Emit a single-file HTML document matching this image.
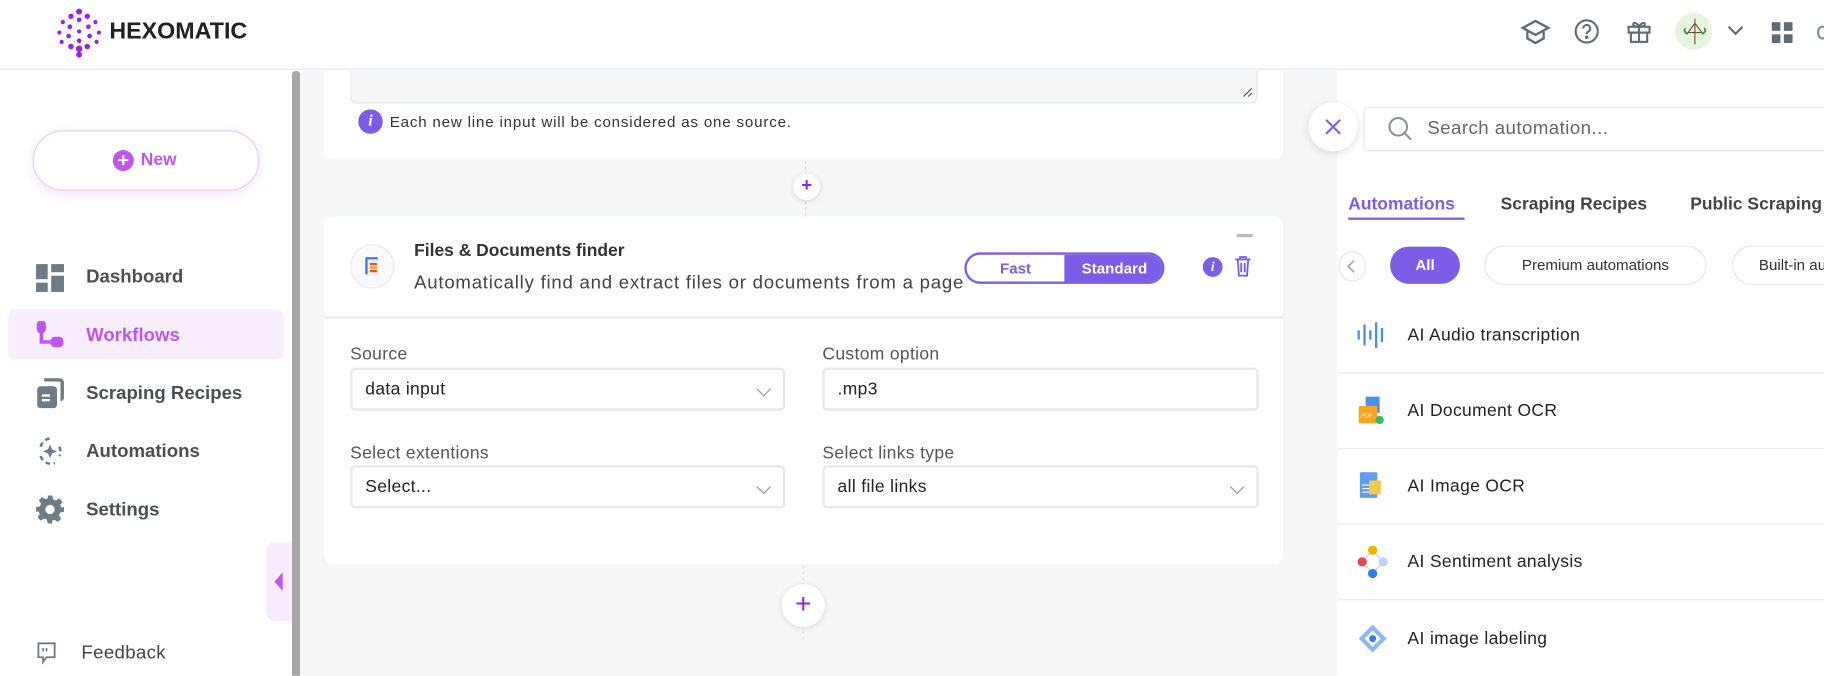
<!DOCTYPE html>
<html><head><meta charset="utf-8">
<style>
*{box-sizing:border-box;margin:0;padding:0}
html,body{width:1824px;height:675px;overflow:hidden;background:#fff;font-family:"Liberation Sans",sans-serif}
#s{position:absolute;left:0;top:0;width:1568px;height:581px;transform:scale(1.16327);transform-origin:0 0;overflow:hidden;background:#fff}
.a{position:absolute}
.nav{position:absolute;left:74px;font-size:16px;font-weight:bold;color:#4a4f55}
.lbl{position:absolute;font-size:15px;color:#555;letter-spacing:.3px}
.inp{position:absolute;height:37px;border:2px solid #e6e8eb;border-radius:4px;background:#fff;font-size:15px;color:#222;padding:8px 11px;letter-spacing:.3px}
.chev{position:absolute;right:12px;top:12px;width:9px;height:9px;border-right:1.5px solid #999;border-bottom:1.5px solid #999;transform:rotate(45deg)}
.row{position:absolute;left:1150px;width:418px;height:65px;border-bottom:1.5px solid #e8eaed}
.row span{position:absolute;left:60px;top:50%;transform:translateY(-50%);font-size:15px;color:#222;letter-spacing:.3px}
.row svg{position:absolute;left:16px;top:50%;transform:translateY(-50%)}
</style></head><body><div id="s">
<div class="a" style="left:0;top:0;width:1568px;height:60px;border-bottom:1.5px solid #e6e6e6;background:#fff"></div>
<svg class="a" style="left:46px;top:6px" width="44" height="44" viewBox="0 0 44 44" fill="#9b1fe8">
<circle cx="22" cy="4" r="2.6"/><circle cx="15" cy="8" r="2.3"/><circle cx="29" cy="8" r="2.3"/><circle cx="22" cy="11" r="2"/>
<circle cx="8" cy="13" r="1.8"/><circle cx="36" cy="13" r="1.8"/><circle cx="14" cy="17" r="2"/><circle cx="30" cy="17" r="2"/>
<circle cx="5" cy="22" r="1.8"/><circle cx="39" cy="22" r="1.8"/><circle cx="22" cy="21" r="1.8"/><circle cx="13" cy="25" r="2"/><circle cx="31" cy="25" r="2"/>
<circle cx="7" cy="30" r="1.8"/><circle cx="37" cy="30" r="1.8"/><circle cx="22" cy="29" r="2"/><circle cx="15" cy="34" r="2.4"/><circle cx="29" cy="34" r="2.4"/>
<circle cx="22" cy="36" r="2.8"/><circle cx="22" cy="41" r="2.5"/></svg>
<div class="a" style="left:94px;top:16px;font-size:20px;font-weight:bold;color:#222">HEXOMATIC</div>
<svg class="a" style="left:1307px;top:15px" width="26" height="24" viewBox="0 0 26 24" fill="none" stroke="#5f6b75" stroke-width="2"><path d="M2 9 13 3l11 6-11 6z"/><path d="M6 12v6l7 4 7-4v-6"/></svg>
<svg class="a" style="left:1353px;top:16px" width="22" height="22" viewBox="0 0 22 22" fill="none" stroke="#5f6b75" stroke-width="1.8"><circle cx="11" cy="11" r="9.5"/><path d="M8 8.5a3 3 0 1 1 4 2.8c-.8.4-1 1-1 2"/><circle cx="11" cy="16" r=".6" fill="#5f6b75"/></svg>
<svg class="a" style="left:1398px;top:16px" width="22" height="22" viewBox="0 0 22 22" fill="none" stroke="#5f6b75" stroke-width="1.8"><rect x="2" y="7" width="18" height="5"/><rect x="4" y="12" width="14" height="8"/><path d="M11 7v13M11 7C9 3 6 3 6 5s3 2 5 2c2 0 5 0 5-2s-3-2-5 2"/></svg>
<div class="a" style="left:1440px;top:11px;width:32px;height:32px;border-radius:50%;background:#e7f5df"></div>
<svg class="a" style="left:1446px;top:14px" width="22" height="26" viewBox="0 0 22 26" fill="none" stroke="#6b5a3a" stroke-width="1"><path d="M11 2v22M5 14l6-8 6 8zM3 10c-2 2 0 5 2 5M19 10c2 2 0 5-2 5" /><path d="M2 11c0 3 2 4 3 4M20 11c0 3-2 4-3 4" stroke="#2a9a2a" stroke-width="1.5"/></svg>
<svg class="a" style="left:1485px;top:21px" width="14" height="10" viewBox="0 0 14 10" fill="none" stroke="#5f6b75" stroke-width="1.8"><path d="M1 2l6 6 6-6"/></svg>
<svg class="a" style="left:1523px;top:19px" width="18" height="18" viewBox="0 0 18 18" fill="#5f6b75"><rect x="0" y="0" width="7.5" height="7.5"/><rect x="10.5" y="0" width="7.5" height="7.5"/><rect x="0" y="10.5" width="7.5" height="7.5"/><rect x="10.5" y="10.5" width="7.5" height="7.5"/></svg>
<div class="a" style="left:1562px;top:22px;width:10px;height:12px;border:2px solid #8a949c;border-radius:6px"></div>

<div class="a" style="left:251px;top:61px;width:7px;height:520px;background:#a6a6a6;border-radius:3px 3px 0 0"></div>
<div class="a" style="left:28px;top:112px;width:195px;height:52px;border:1.5px solid #e9c9f8;border-radius:26px;background:#fff;box-shadow:0 3px 10px rgba(190,110,240,.18)"></div>
<div class="a" style="left:97px;top:129px;width:18px;height:18px;border-radius:50%;background:#c155ef;color:#fff;font-size:17px;line-height:17px;text-align:center;font-weight:bold">+</div>
<div class="a" style="left:121px;top:129px;font-size:15px;font-weight:bold;color:#c155ef">New</div>

<svg class="a" style="left:31px;top:227px" width="24" height="24" viewBox="0 0 24 24" fill="#6e7c88"><rect x="0" y="0" width="10" height="13"/><rect x="13" y="0" width="11" height="7"/><rect x="13" y="10" width="11" height="14"/><rect x="0" y="16" width="10" height="8"/></svg>
<div class="nav" style="top:230px">Dashboard</div>
<div class="a" style="left:7px;top:266px;width:237px;height:43px;background:#f8eefd;border-radius:6px"></div>
<svg class="a" style="left:31px;top:276px" width="24" height="24" viewBox="0 0 24 24" fill="none" stroke="#c155ef" stroke-width="3"><rect x="2" y="1" width="5" height="8" rx="2" fill="#c155ef"/><path d="M4.5 9v9h8"/><rect x="14" y="15" width="8" height="6" rx="2" fill="#c155ef"/></svg>
<div class="nav" style="top:280px;color:#c155ef">Workflows</div>
<svg class="a" style="left:31px;top:325px" width="24" height="26" viewBox="0 0 24 26" fill="#6e7c88"><path d="M7 0h13a4 4 0 0 1 4 4v13a3 3 0 0 1-3 3V4a1 1 0 0 0-1-1H7z"/><rect x="1" y="7" width="17" height="19" rx="3"/><rect x="5" y="14" width="7" height="2" fill="#fff"/><rect x="5" y="18" width="7" height="2" fill="#fff"/></svg>
<div class="nav" style="top:330px">Scraping Recipes</div>
<svg class="a" style="left:31px;top:375px" width="24" height="26" viewBox="0 0 24 26" fill="none" stroke="#6e7c88" stroke-width="2.2"><path d="M4 9a9 9 0 0 1 8-7M20 9a9 9 0 0 1 0 8M4 17a9 9 0 0 0 12 6" stroke-dasharray="4 3"/><path d="M12 7l1.7 4.3L18 13l-4.3 1.7L12 19l-1.7-4.3L6 13l4.3-1.7z" fill="#6e7c88" stroke="none"/></svg>
<div class="nav" style="top:380px">Automations</div>
<svg class="a" style="left:31px;top:426px" width="24" height="24" viewBox="0 0 24 24" fill="#6e7c88"><path d="M10 0h4l.7 3.3 2.4 1 2.8-1.9 2.8 2.8-1.9 2.8 1 2.4L24 10v4l-3.3.7-1 2.4 1.9 2.8-2.8 2.8-2.8-1.9-2.4 1L14 24h-4l-.7-3.3-2.4-1-2.8 1.9-2.8-2.8 1.9-2.8-1-2.4L0 14v-4l3.3-.7 1-2.4L2.4 4.1l2.8-2.8 2.8 1.9 2.4-1z"/><circle cx="12" cy="12" r="4" fill="#fff"/></svg>
<div class="nav" style="top:430px">Settings</div>
<div class="a" style="left:229px;top:466px;width:22px;height:68px;background:#f7ebfd;border-radius:8px 0 0 8px"></div>
<div class="a" style="left:236px;top:492px;width:0;height:0;border-top:8px solid transparent;border-bottom:8px solid transparent;border-right:7px solid #c155ef"></div>
<svg class="a" style="left:32px;top:552px" width="16" height="20" viewBox="0 0 16 20" fill="none" stroke="#6e7c88" stroke-width="1.6"><path d="M1 1h14v12H8l-3 4v-4H1z"/><path d="M5 5v3M8 5v3" stroke-width="1.4"/></svg>
<div class="a" style="left:70px;top:553px;font-size:16px;color:#444;letter-spacing:.3px">Feedback</div>

<div class="a" style="left:258px;top:61px;width:892px;height:520px;background:#f6f7f9"></div>
<div class="a" style="left:279px;top:61px;width:824px;height:76px;background:#fff;border-radius:0 0 8px 8px"></div>
<div class="a" style="left:301px;top:61px;width:780px;height:28px;background:#f6f7f9;border:1.5px solid #e3e5e8;border-top:none;border-radius:0 0 6px 6px"></div>
<svg class="a" style="left:1068px;top:75px" width="9" height="9" viewBox="0 0 9 9" stroke="#555" stroke-width="1"><path d="M1 8 8 1M5 8l3-3"/></svg>
<div class="a" style="left:308px;top:94px;width:21px;height:21px;border-radius:50%;background:#7b5de8;color:#fff;font:italic bold 14px/21px 'Liberation Serif',serif;text-align:center">i</div>
<div class="a" style="left:335px;top:97px;font-size:13px;color:#333;letter-spacing:.7px">Each new line input will be considered as one source.</div>
<div class="a" style="left:692px;top:138px;height:48px;border-left:1px dashed #ddd"></div>
<div class="a" style="left:682px;top:149px;width:23px;height:23px;border-radius:50%;background:#fff;box-shadow:0 1px 5px rgba(0,0,0,.15);color:#9b1fe8;font-size:16px;line-height:22px;text-align:center;font-weight:bold">+</div>

<div class="a" style="left:279px;top:186px;width:824px;height:299px;background:#fff;border-radius:8px"></div>
<div class="a" style="left:1063px;top:201px;width:14px;height:3px;background:#bbb;border-radius:2px"></div>
<div class="a" style="left:301px;top:210px;width:38px;height:38px;border-radius:50%;border:1.5px solid #e8eaef;background:#f9fafc"></div>
<svg class="a" style="left:313px;top:220px" width="14" height="18" viewBox="0 0 14 18"><rect x="1" y="1" width="11" height="15" rx="1" fill="#3f7be8"/><rect x="3" y="3" width="10" height="14" fill="#eee"/><rect x="5" y="6" width="6" height="2" fill="#e74c3c"/><rect x="5" y="9" width="6" height="2" fill="#f39c12"/><rect x="5" y="12" width="6" height="2" fill="#e74c3c"/></svg>
<div class="a" style="left:356px;top:207px;font-size:15px;font-weight:bold;color:#333">Files &amp; Documents finder</div>
<div class="a" style="left:356px;top:235px;font-size:16px;color:#444;letter-spacing:.65px;white-space:nowrap">Automatically find and extract files or documents from a page</div>
<div class="a" style="left:829px;top:217px;width:172px;height:27px;border:2px solid #7b5de8;border-radius:14px;overflow:hidden;background:#fff">
<div class="a" style="left:0;top:0;width:84px;height:23px;color:#7b5de8;font-size:13px;font-weight:bold;text-align:center;line-height:23px">Fast</div>
<div class="a" style="left:84px;top:0;width:86px;height:23px;background:#7b5de8;color:#fff;font-size:13px;font-weight:bold;text-align:center;line-height:23px">Standard</div></div>
<div class="a" style="left:1034px;top:221px;width:17px;height:17px;border-radius:50%;background:#7b5de8;color:#fff;font:italic bold 12px/17px 'Liberation Serif',serif;text-align:center">i</div>
<svg class="a" style="left:1061px;top:219px" width="15" height="19" viewBox="0 0 15 19" fill="none" stroke="#7b5de8" stroke-width="1.6"><path d="M1 4h13M5 4V2h5v2M3 4l1 14h7l1-14M6 7v8M9 7v8"/></svg>
<div class="a" style="left:279px;top:272px;width:824px;height:1.5px;background:#e9ebee"></div>

<div class="lbl" style="left:301px;top:296px">Source</div>
<div class="inp" style="left:301px;top:316px;width:374px">data input<div class="chev"></div></div>
<div class="lbl" style="left:707px;top:296px">Custom option</div>
<div class="inp" style="left:707px;top:316px;width:375px">.mp3</div>
<div class="lbl" style="left:301px;top:381px">Select extentions</div>
<div class="inp" style="left:301px;top:400px;width:374px">Select...<div class="chev"></div></div>
<div class="lbl" style="left:707px;top:381px">Select links type</div>
<div class="inp" style="left:707px;top:400px;width:375px">all file links<div class="chev"></div></div>

<div class="a" style="left:690px;top:486px;height:64px;border-left:1px dashed #e2e2e2"></div>
<div class="a" style="left:672px;top:502px;width:37px;height:37px;border-radius:50%;background:#fff;box-shadow:0 1px 6px rgba(0,0,0,.13);color:#9b1fe8;font-size:24px;line-height:35px;text-align:center">+</div>

<div class="a" style="left:1150px;top:61px;width:418px;height:520px;background:#fff"></div>
<div class="a" style="left:1125px;top:88px;width:42px;height:42px;border-radius:50%;background:#fff;box-shadow:0 2px 8px rgba(0,0,0,.13)"></div>
<svg class="a" style="left:1139px;top:102px" width="14" height="14" viewBox="0 0 14 14" stroke="#7b5de8" stroke-width="1.8"><path d="M1 1l12 12M13 1 1 13"/></svg>
<div class="a" style="left:1172px;top:92px;width:410px;height:38px;border:1.5px solid #e3e5e8;border-radius:4px"></div>
<svg class="a" style="left:1193px;top:100px" width="22" height="22" viewBox="0 0 22 22" fill="none" stroke="#8a929a" stroke-width="1.8"><circle cx="9" cy="9" r="7.5"/><path d="M14.5 14.5 20 20"/></svg>
<div class="a" style="left:1227px;top:102px;font-size:16px;color:#666;letter-spacing:.4px">Search automation...</div>
<div class="a" style="left:1159px;top:167px;font-size:15px;font-weight:bold;color:#7b5de8">Automations</div>
<div class="a" style="left:1159px;top:187px;width:100px;height:1.5px;background:#7b5de8"></div>
<div class="a" style="left:1290px;top:167px;font-size:15px;font-weight:bold;color:#444">Scraping Recipes</div>
<div class="a" style="left:1453px;top:167px;font-size:15px;font-weight:bold;color:#444;white-space:nowrap">Public Scraping</div>
<div class="a" style="left:1151px;top:216px;width:23px;height:26px;border-radius:12px;border:1px solid #e6e6e6;background:#fff"></div>
<svg class="a" style="left:1158px;top:223px" width="8" height="12" viewBox="0 0 8 12" fill="none" stroke="#aaa" stroke-width="1.5"><path d="M6 1 1 6l5 5"/></svg>
<div class="a" style="left:1195px;top:212px;width:60px;height:32px;border-radius:16px;background:#7b5de8;color:#fff;font-size:13px;font-weight:bold;text-align:center;line-height:32px">All</div>
<div class="a" style="left:1276px;top:211px;width:191px;height:34px;border-radius:17px;border:1.5px solid #e6e6e6;color:#333;font-size:13px;text-align:center;line-height:31px">Premium automations</div>
<div class="a" style="left:1489px;top:211px;width:120px;height:34px;border-radius:17px;border:1.5px solid #e6e6e6;color:#333;font-size:13px;padding-left:22px;line-height:31px;white-space:nowrap">Built-in automations</div>

<div class="row" style="top:256px"><svg width="26" height="26" viewBox="0 0 26 26" stroke="#4a8fe8" stroke-width="2"><path d="M2 9v8M7 4v18M12 9v8M17 2v22M22 7v12"/></svg><span>AI Audio transcription</span></div>
<div class="row" style="top:321px"><svg width="26" height="28" viewBox="0 0 26 28"><rect x="8" y="2" width="12" height="14" fill="#4a8fe8"/><rect x="2" y="10" width="16" height="15" rx="1" fill="#f5a623"/><text x="4" y="20" font-size="5" fill="#fff" font-family="Liberation Sans">PDF</text><circle cx="20" cy="22" r="3.5" fill="#3cb66a"/></svg><span>AI Document OCR</span></div>
<div class="row" style="top:386px"><svg width="26" height="28" viewBox="0 0 26 28"><rect x="3" y="2" width="15" height="22" rx="1" fill="#5d9cf0"/><rect x="11" y="9" width="10" height="12" fill="#f7c948"/><path d="M5 13h6M5 16h6M5 19h6" stroke="#fff"/></svg><span>AI Image OCR</span></div>
<div class="row" style="top:451px"><svg width="28" height="30" viewBox="0 0 28 30"><path d="M14 5 5 15l9 10 9-10z" fill="none" stroke="#ccc"/><circle cx="14" cy="5" r="4" fill="#f5b400"/><circle cx="5" cy="15" r="4" fill="#e84855"/><circle cx="23" cy="15" r="4" fill="#b9d5f5"/><circle cx="14" cy="25" r="4" fill="#2f80ed"/></svg><span>AI Sentiment analysis</span></div>
<div class="row" style="top:516px;border:none"><svg width="28" height="28" viewBox="0 0 28 28"><path d="M14 2 26 14 14 26 2 14z" fill="#8ab8f5"/><path d="M14 7 21 14 14 21 7 14z" fill="#fff"/><circle cx="14" cy="14" r="3" fill="#3b7ddd"/></svg><span>AI image labeling</span></div>
</div></body></html>
